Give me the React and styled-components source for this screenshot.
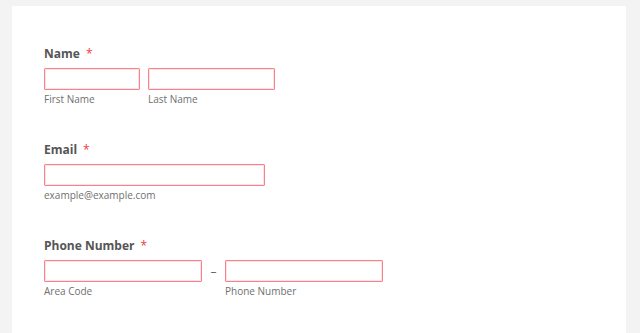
import React from "react";
import styled, { createGlobalStyle } from "styled-components";

const Global = createGlobalStyle`
  html, body { margin: 0; padding: 0; background: #f3f3f3; }
  body { font-family: "Open Sans", "DejaVu Sans", sans-serif; }
`;

const Page = styled.div`
  padding: 6px 14px 0 12px;
  height: 333px;
  box-sizing: border-box;
  overflow: hidden;
`;

const Card = styled.div`
  background: #fff;
  width: 614px;
  height: 400px;
  box-sizing: border-box;
  padding: 40px 32px 0;
  display: flex;
  flex-direction: column;
  gap: 36px;
`;

const Field = styled.div`
  display: flex;
  flex-direction: column;
`;

const Label = styled.div`
  font-size: 12px;
  line-height: 16px;
  font-weight: 700;
  color: #555;
  margin-bottom: 6px;
`;

const Star = styled.span`
  color: #f23a3c;
  margin-left: 6px;
  font-weight: 400;
`;

const Row = styled.div`
  display: flex;
  align-items: flex-start;
  gap: ${(p) => p.$gap ?? 8}px;
`;

const Col = styled.div`
  display: flex;
  flex-direction: column;
  flex: none;
  width: ${(p) => p.$w}px;
`;

const Input = styled.input`
  display: block;
  width: 100%;
  height: 22px;
  box-sizing: border-box;
  border: 1px solid #f7828b;
  box-shadow: inset 0 0 0 1px #fde3e5;
  border-radius: 1px;
  background: #fff;
  outline: none;
  margin: 0;
  padding: 0 4px;
`;

const Sub = styled.div`
  font-size: 10px;
  line-height: 14px;
  color: #6f6f6f;
  margin-top: 2px;
  white-space: nowrap;
`;

const Dash = styled.div`
  flex: none;
  width: 23px;
  height: 22px;
  display: flex;
  align-items: center;
  justify-content: center;
  color: #666;
  font-size: 12px;
`;

export default function App() {
  return (
    <>
      <Global />
      <Page>
        <Card>
          <Field>
            <Label>
              Name<Star>*</Star>
            </Label>
            <Row>
              <Col $w={96}>
                <Input />
                <Sub>First Name</Sub>
              </Col>
              <Col $w={127}>
                <Input />
                <Sub>Last Name</Sub>
              </Col>
            </Row>
          </Field>
          <Field>
            <Label>
              Email<Star>*</Star>
            </Label>
            <Col $w={221}>
              <Input />
              <Sub>example@example.com</Sub>
            </Col>
          </Field>
          <Field>
            <Label>
              Phone Number<Star>*</Star>
            </Label>
            <Row $gap={0}>
              <Col $w={158}>
                <Input />
                <Sub>Area Code</Sub>
              </Col>
              <Dash>–</Dash>
              <Col $w={158}>
                <Input />
                <Sub>Phone Number</Sub>
              </Col>
            </Row>
          </Field>
        </Card>
      </Page>
    </>
  );
}
